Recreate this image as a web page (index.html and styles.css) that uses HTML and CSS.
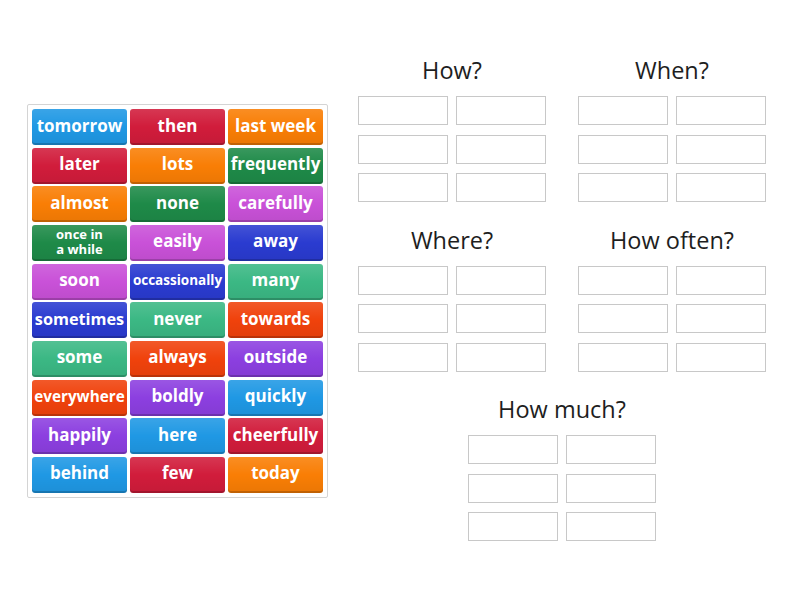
FILE: index.html
```html
<!DOCTYPE html>
<html>
<head>
<meta charset="utf-8">
<link rel="stylesheet" href="styles.css">
</head>
<body>
<div class="page">
  <div class="pool">
    <div class="tile blue"><span>tomorrow</span></div>
    <div class="tile red"><span>then</span></div>
    <div class="tile orange"><span>last week</span></div>
    <div class="tile red"><span>later</span></div>
    <div class="tile orange"><span>lots</span></div>
    <div class="tile green"><span>frequently</span></div>
    <div class="tile orange"><span>almost</span></div>
    <div class="tile green"><span>none</span></div>
    <div class="tile pink"><span>carefully</span></div>
    <div class="tile green two"><span>once in<br>a while</span></div>
    <div class="tile pink"><span>easily</span></div>
    <div class="tile navy"><span>away</span></div>
    <div class="tile pink"><span>soon</span></div>
    <div class="tile navy"><span>occassionally</span></div>
    <div class="tile mint"><span>many</span></div>
    <div class="tile navy"><span>sometimes</span></div>
    <div class="tile mint"><span>never</span></div>
    <div class="tile tomato"><span>towards</span></div>
    <div class="tile mint"><span>some</span></div>
    <div class="tile tomato"><span>always</span></div>
    <div class="tile violet"><span>outside</span></div>
    <div class="tile tomato"><span>everywhere</span></div>
    <div class="tile violet"><span>boldly</span></div>
    <div class="tile blue"><span>quickly</span></div>
    <div class="tile violet"><span>happily</span></div>
    <div class="tile blue"><span>here</span></div>
    <div class="tile red"><span>cheerfully</span></div>
    <div class="tile blue"><span>behind</span></div>
    <div class="tile red"><span>few</span></div>
    <div class="tile orange"><span>today</span></div>
  </div>
  <div class="groups">
    <div class="group">
      <div class="title">How?</div>
      <div class="slots"><div class="slot"></div><div class="slot"></div><div class="slot"></div><div class="slot"></div><div class="slot"></div><div class="slot"></div></div>
    </div>
    <div class="group">
      <div class="title">When?</div>
      <div class="slots"><div class="slot"></div><div class="slot"></div><div class="slot"></div><div class="slot"></div><div class="slot"></div><div class="slot"></div></div>
    </div>
    <div class="group">
      <div class="title">Where?</div>
      <div class="slots"><div class="slot"></div><div class="slot"></div><div class="slot"></div><div class="slot"></div><div class="slot"></div><div class="slot"></div></div>
    </div>
    <div class="group">
      <div class="title">How often?</div>
      <div class="slots"><div class="slot"></div><div class="slot"></div><div class="slot"></div><div class="slot"></div><div class="slot"></div><div class="slot"></div></div>
    </div>
    <div class="group wide">
      <div class="title">How much?</div>
      <div class="slots"><div class="slot"></div><div class="slot"></div><div class="slot"></div><div class="slot"></div><div class="slot"></div><div class="slot"></div></div>
    </div>
  </div>
</div>
<script src="fit.js"></script>
</body>
</html>
```

FILE: fit.js
```js
document.querySelectorAll('.tile:not(.two) span').forEach(function (s) {
  var size = 17;
  while (s.offsetWidth > 90 && size > 10) {
    size -= 0.25;
    s.style.fontSize = size + 'px';
  }
});
```

FILE: styles.css
```css
html, body {
  margin: 0;
  padding: 0;
  background: #ffffff;
}
body {
  font-family: "Open Sans", "Liberation Sans", sans-serif;
  width: 800px;
  height: 600px;
  overflow: hidden;
}
.page {
  display: flex;
  align-items: flex-start;
}
.pool {
  margin-left: 27px;
  margin-top: 104px;
  border: 1px solid #d4d4d4;
  border-radius: 2px;
  padding: 4px;
  display: grid;
  grid-template-columns: repeat(3, 95px);
  grid-auto-rows: 36px;
  column-gap: 3px;
  row-gap: 2.67px;
}
.tile {
  border-radius: 3px;
  display: flex;
  align-items: center;
  justify-content: center;
  color: #ffffff;
  font-weight: 700;
  font-size: 17px;
  line-height: 20px;
  white-space: nowrap;
  text-align: center;
  box-shadow: inset 0 -2px 0 rgba(0, 0, 0, 0.18);
  background-image: linear-gradient(to bottom, rgba(255, 255, 255, 0.12), rgba(255, 255, 255, 0) 50%, rgba(0, 0, 0, 0.06));
}
.tile span {
  display: inline-block;
  margin-top: -3px;
}
.tile.two span {
  font-size: 13px;
  line-height: 14.5px;
  margin-top: -2px;
}
.blue { background-color: #1f98e4; }
.red { background-color: #d11c3b; }
.orange { background-color: #f97e05; }
.green { background-color: #1e8a48; }
.pink { background-color: #c951d8; }
.navy { background-color: #2a3bd0; }
.mint { background-color: #3bb884; }
.tomato { background-color: #f0420c; }
.violet { background-color: #8c3fe0; }

.groups {
  margin-left: 30px;
  margin-top: 56px;
  display: grid;
  grid-template-columns: 188px 188px;
  column-gap: 32px;
  row-gap: 23.5px;
}
.group.wide {
  grid-column: 1 / span 2;
  justify-self: center;
  width: 188px;
}
.title {
  font-size: 23.5px;
  line-height: 28px;
  color: #1e1e1e;
  text-align: center;
  margin-bottom: 12px;
}
.slots {
  display: grid;
  grid-template-columns: 90px 90px;
  column-gap: 8px;
  grid-auto-rows: 29px;
  row-gap: 9.5px;
}
.slot {
  border: 1px solid #c8c8c8;
  background: #ffffff;
}
```
